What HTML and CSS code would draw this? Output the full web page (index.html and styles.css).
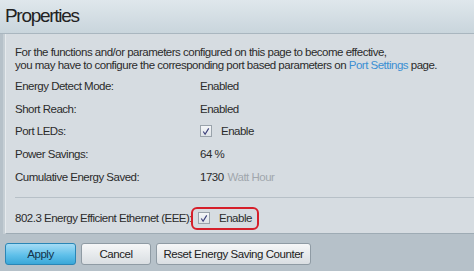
FILE: index.html
```html
<!DOCTYPE html>
<html>
<head>
<meta charset="utf-8">
<link rel="stylesheet" href="styles.css">
</head>
<body>
<div class="page">
  <div class="header"><h1 class="title">Properties</h1></div>
  <div class="panel">
    <p class="intro">For the functions and/or parameters configured on this page to become effective,<br>you may have to configure the corresponding port based parameters on <a class="link">Port Settings</a> page.</p>
    <div class="rows">
      <div class="row"><span class="label">Energy Detect Mode:</span><span class="value">Enabled</span></div>
      <div class="row"><span class="label">Short Reach:</span><span class="value">Enabled</span></div>
      <div class="row"><span class="label">Port LEDs:</span><span class="value"><span class="check"><svg width="11" height="11" viewBox="0 0 11 11"><path d="M2.5 5.5 L4.5 8.5 L8.5 2" fill="none" stroke="#3b3f7a" stroke-width="1.3"/></svg></span><span class="enable">Enable</span></span></div>
      <div class="row"><span class="label">Power Savings:</span><span class="value">64 %</span></div>
      <div class="row"><span class="label">Cumulative Energy Saved:</span><span class="value">1730 <span class="unit">Watt Hour</span></span></div>
    </div>
    <div class="sep"></div>
    <div class="row eee"><span class="eee-label">802.3 Energy Efficient Ethernet (EEE):</span><span class="highlight"><span class="check"><svg width="11" height="11" viewBox="0 0 11 11"><path d="M2.5 5.5 L4.5 8.5 L8.5 2" fill="none" stroke="#3b3f7a" stroke-width="1.3"/></svg></span><span class="enable">Enable</span></span></div>
  </div>
  <div class="buttons">
    <button class="btn primary">Apply</button>
    <button class="btn cancel">Cancel</button>
    <button class="btn reset">Reset Energy Saving Counter</button>
  </div>
</div>
</body>
</html>
```
FILE: styles.css
```css
* { box-sizing: border-box; }
html, body { margin: 0; padding: 0; }
body {
  font-family: "Liberation Sans", Arial, sans-serif;
  font-size: 11.5px;
  letter-spacing: -0.5px;
  color: #2b2b2b;
  background: #b6c1c9;
  width: 474px;
  height: 271px;
  overflow: hidden;
}
.page { display: flex; flex-direction: column; }
.header {
  height: 34px;
  background: linear-gradient(#dfe7ec, #c9d5dc);
  border-bottom: 1px solid #a9b6bf;
  padding-left: 5px;
}
.title {
  margin: 0;
  font-weight: normal;
  font-size: 19px;
  letter-spacing: -1.3px;
  line-height: 32px;
  color: #222;
}
.panel {
  margin-left: 5px;
  height: 200px;
  background: #d6dce1;
  border-left: 1px solid #e6eaed;
  border-bottom: 1px solid #9eabb4;
  padding: 12px 0 0 9px;
  box-shadow: -2px 0 0 #c6cfd5;
}
.intro {
  margin: 0;
  line-height: 12.5px;
  white-space: nowrap;
}
.link { color: #3b8fd3; }
.rows { margin-top: 4px; }
.row {
  display: flex;
  align-items: center;
  height: 22.6px;
  white-space: nowrap;
}
.label { width: 185px; }
.value { display: flex; align-items: center; }
.check {
  display: inline-flex;
  width: 12px;
  height: 12px;
  border: 1px solid #9aa3ab;
  background: linear-gradient(#f4f6f8, #dfe4e8);
  align-items: center;
  justify-content: center;
  margin-right: 9px;
}
.unit { color: #a1a7ad; margin-left: 4px; }
.sep {
  margin-top: 9px;
  height: 1px;
  background: #b7c0c7;
}
.eee { margin-top: 9px; }
.highlight {
  display: inline-flex;
  align-items: center;
  border: 2px solid #d61f2a;
  border-radius: 6px;
  padding: 2px 5px 2px 5px;
  height: 23px;
  margin-left: -1px;
}
.buttons {
  display: flex;
  gap: 5px;
  padding: 9px 0 0 5px;
}
.btn {
  font-family: "Liberation Sans", Arial, sans-serif;
  font-size: 11.5px;
  letter-spacing: -0.45px;
  white-space: nowrap;
  height: 22px;
  border: 1px solid #8f9ba4;
  border-radius: 3px;
  color: #222;
  background: linear-gradient(#f6f7f8, #d9dee2);
  padding: 0;
}
.primary {
  width: 71px;
  border-color: #2a86b6;
  background: linear-gradient(#a6dcf5, #5fc0ea 55%, #3aa7d8);
  color: #13324a;
}
.cancel { width: 70px; }
.reset { width: 155px; }
```
